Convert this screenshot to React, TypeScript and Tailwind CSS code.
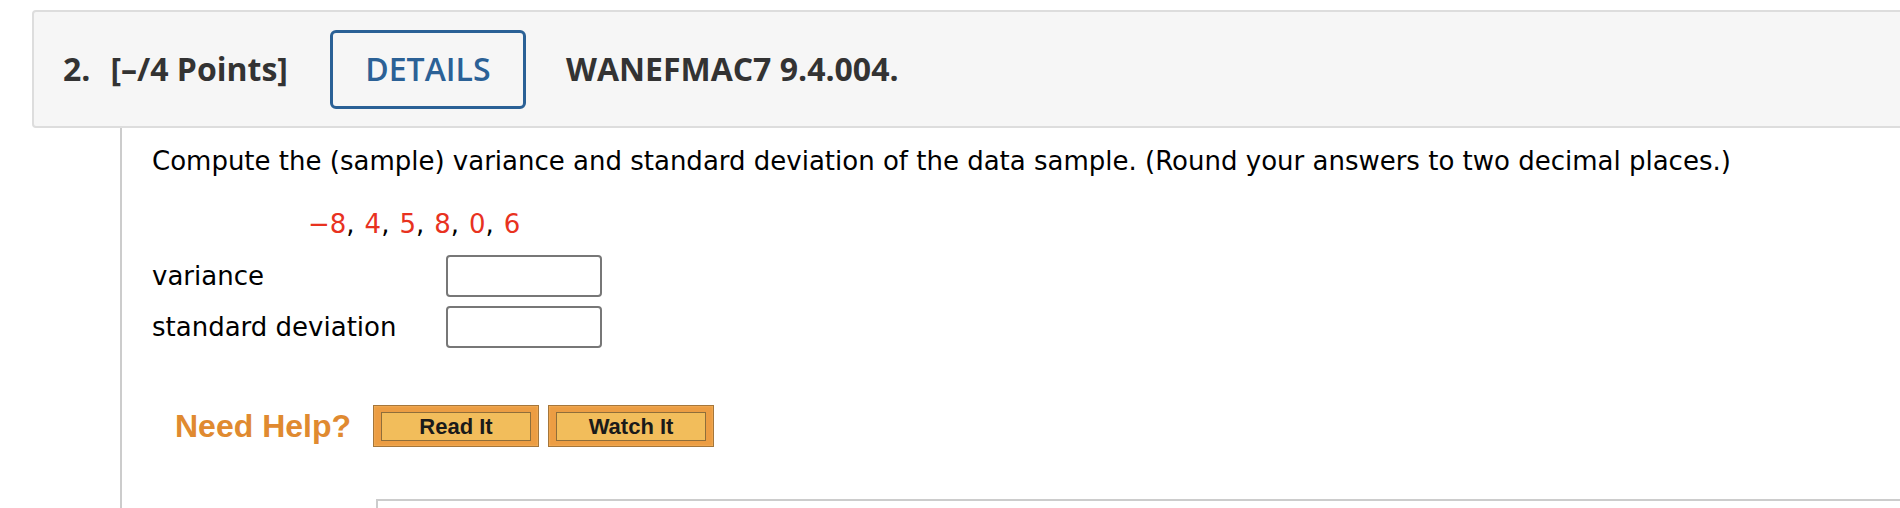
import React from "react";

const numbers = ["−8", "4", "5", "8", "0", "6"];

const HelpButton = ({ label }: { label: string }) => (
  <button className="w-[166px] h-[42px] border border-[#a5763a] bg-[#ec9d43] px-[7px] pt-[6px] pb-[5px] shadow-[inset_0_0_2px_#f7c77a]">
    <div className="h-full w-full border border-[#8f6e3a] bg-[#f2bd5b] flex items-center justify-center font-['Liberation_Sans',Arial,sans-serif] font-bold text-[22px] leading-none text-[#1a1a1a]">
      {label}
    </div>
  </button>
);

const App = () => {
  return (
    <div className="w-[1900px] h-[508px] bg-white overflow-hidden pt-[10px]">
      <div className="ml-[32px] mr-[-20px] h-[118px] border-2 border-[#dddddd] rounded-[4px] bg-[#f6f6f6] flex items-center pl-[29px] font-['Open_Sans',sans-serif] text-[#333333] text-[32px]">
        <span className="font-bold">2.</span>
        <span className="font-bold ml-[20px]">[–/4 Points]</span>
        <div className="ml-[42px] w-[196px] h-[79px] border-[3px] border-[#2b6196] rounded-[6px] flex items-center justify-center text-[#2b6196] font-semibold">
          DETAILS
        </div>
        <span className="font-bold ml-[40px]">WANEFMAC7 9.4.004.</span>
      </div>

      <div className="ml-[120px] h-[380px] border-l-2 border-[#cccccc] pl-[30px] pt-[17px] font-['DejaVu_Sans',Verdana,sans-serif] text-black">
        <p className="text-[26px] leading-[32px]">
          Compute the (sample) variance and standard deviation of the data sample. (Round your answers to two decimal places.)
        </p>

        <div className="mt-[31px] ml-[156px] text-[26px] leading-[32px] flex">
          {numbers.map((n, i) => (
            <span key={i}>
              <span className="text-[#e8321f]">{n}</span>
              {i < numbers.length - 1 && <span className="mr-[10px]">,</span>}
            </span>
          ))}
        </div>

        <div className="mt-[15px] flex items-center">
          <span className="w-[294px] text-[26px] leading-[32px]">variance</span>
          <input className="w-[156px] h-[42px] border-2 border-[#777777] rounded-[4px] bg-white" />
        </div>
        <div className="mt-[9px] flex items-center">
          <span className="w-[294px] text-[26px] leading-[32px]">standard deviation</span>
          <input className="w-[156px] h-[42px] border-2 border-[#777777] rounded-[4px] bg-white" />
        </div>

        <div className="mt-[57px] ml-[23px] flex items-center">
          <span className="font-['Liberation_Sans',Arial,sans-serif] font-bold text-[32px] leading-none text-[#e08a30] mr-[22px]">
            Need Help?
          </span>
          <HelpButton label="Read It" />
          <div className="w-[9px]" />
          <HelpButton label="Watch It" />
        </div>

        <div className="mt-[52px] ml-[224px] mr-[-40px] h-[20px] border-t-2 border-l-2 border-[#cccccc]" />
      </div>
    </div>
  );
};

export default App;
